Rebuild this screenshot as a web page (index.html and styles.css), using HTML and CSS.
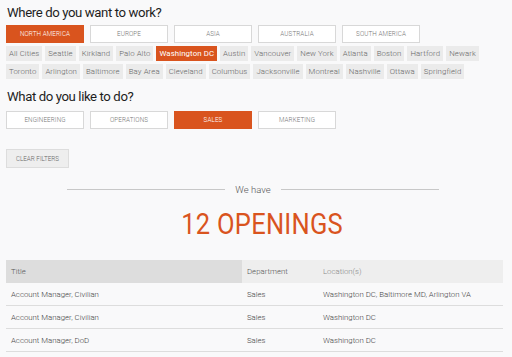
FILE: index.html
```html
<!DOCTYPE html>
<html>
<head>
<meta charset="utf-8">
<link rel="stylesheet" href="styles.css">
</head>
<body>
<div class="page">
  <h2 class="q">Where do you want to work?</h2>
  <div class="btns">
    <button class="btn on">NORTH AMERICA</button>
    <button class="btn">EUROPE</button>
    <button class="btn">ASIA</button>
    <button class="btn">AUSTRALIA</button>
    <button class="btn">SOUTH AMERICA</button>
  </div>
  <div class="chips">
    <span class="chip">All Cities</span>
    <span class="chip">Seattle</span>
    <span class="chip">Kirkland</span>
    <span class="chip">Palo Alto</span>
    <span class="chip on">Washington DC</span>
    <span class="chip">Austin</span>
    <span class="chip">Vancouver</span>
    <span class="chip">New York</span>
    <span class="chip">Atlanta</span>
    <span class="chip">Boston</span>
    <span class="chip">Hartford</span>
    <span class="chip">Newark</span>
    <span class="chip">Toronto</span>
    <span class="chip">Arlington</span>
    <span class="chip">Baltimore</span>
    <span class="chip">Bay Area</span>
    <span class="chip">Cleveland</span>
    <span class="chip">Columbus</span>
    <span class="chip">Jacksonville</span>
    <span class="chip">Montreal</span>
    <span class="chip">Nashville</span>
    <span class="chip">Ottawa</span>
    <span class="chip">Springfield</span>
  </div>
  <h2 class="q q2">What do you like to do?</h2>
  <div class="btns">
    <button class="btn">ENGINEERING</button>
    <button class="btn">OPERATIONS</button>
    <button class="btn on">SALES</button>
    <button class="btn">MARKETING</button>
  </div>
  <button class="clear">CLEAR FILTERS</button>
  <div class="have"><span class="line"></span><span class="have-t">We have</span><span class="line"></span></div>
  <div class="count"><span class="count-t">12 OPENINGS</span></div>
  <table class="jobs">
    <thead>
      <tr><th class="sorted c1">Title</th><th class="c2">Department</th><th>Location(s)</th></tr>
    </thead>
    <tbody>
      <tr><td>Account Manager, Civilian</td><td>Sales</td><td>Washington DC, Baltimore MD, Arlington VA</td></tr>
      <tr><td>Account Manager, Civilian</td><td>Sales</td><td>Washington DC</td></tr>
      <tr><td>Account Manager, DoD</td><td>Sales</td><td>Washington DC</td></tr>
    </tbody>
  </table>
</div>
</body>
</html>
```

FILE: styles.css
```css
html, body { margin: 0; padding: 0; background: #f9f9fa; }
body { font-family: Roboto, "Liberation Sans", sans-serif; color: #333; }
.page { padding: 3px 9px 0 6px; }
.q { margin: 0 0 3px 1px; font-family: Roboto, "Liberation Sans", sans-serif; font-size: 13.2px; font-weight: 400; color: #1e1e1e; line-height: 19px; letter-spacing: -0.4px; }
.q2 { margin-top: 8px; margin-bottom: 5px; }
.btns { display: flex; gap: 6px; }
.btn {
  width: 78px; height: 18px; padding: 0; margin: 0;
  background: #fff; border: 1px solid #d8d8d8; border-radius: 0;
  font-family: Roboto, "Liberation Sans", sans-serif; font-size: 6.3px; font-weight: 300; color: #777; letter-spacing: 0.1px;
}
.btn.on { background: #d9541e; border-color: #d9541e; color: #fff; }
.chips { display: flex; flex-wrap: wrap; gap: 3px 3px; margin-top: 3px; width: 482px; }
.chip {
  background: #ebebeb; color: #666; font-size: 7.8px; font-weight: 300; line-height: 15px; height: 15px; padding: 0 3px;
  letter-spacing: 0.1px;
}
.chip.on { background: #d9541e; color: #fff; font-weight: 400; }
.clear {
  display: block; margin: 20px 0 0 0; width: 63px; height: 19px; padding: 0;
  background: #eee; border: 1px solid #ddd; border-radius: 0;
  font-family: Roboto, "Liberation Sans", sans-serif; font-size: 6.3px; font-weight: 300; color: #666;
}
.have { display: flex; align-items: center; justify-content: center; gap: 10px; margin-top: 14px; height: 14px; padding-right: 3px; }
.line { width: 158px; height: 1px; background: #c8c8c8; }
.have-t { font-size: 9.5px; color: #555; font-weight: 300; }
.count { text-align: center; margin-top: 8px; padding-left: 16px; height: 40px; }
.count-t { display: inline-block; color: #d9541e; font-size: 30px; line-height: 40px; transform: scaleX(0.85); letter-spacing: 0.3px; }
.jobs { width: 497px; border-collapse: collapse; margin-top: 16px; font-size: 7.8px; color: #444; font-weight: 300; }
.jobs th { background: #eee; text-align: left; font-weight: 300; height: 23px; padding: 0 5px; color: #555; }
.jobs th.sorted { background: #ddd; }
.jobs th:last-child { color: #888; }
.c1 { width: 226px; }
.c2 { width: 66px; }
.jobs td { height: 22px; padding: 0 5px; border-bottom: 1px solid #ddd; }
```
